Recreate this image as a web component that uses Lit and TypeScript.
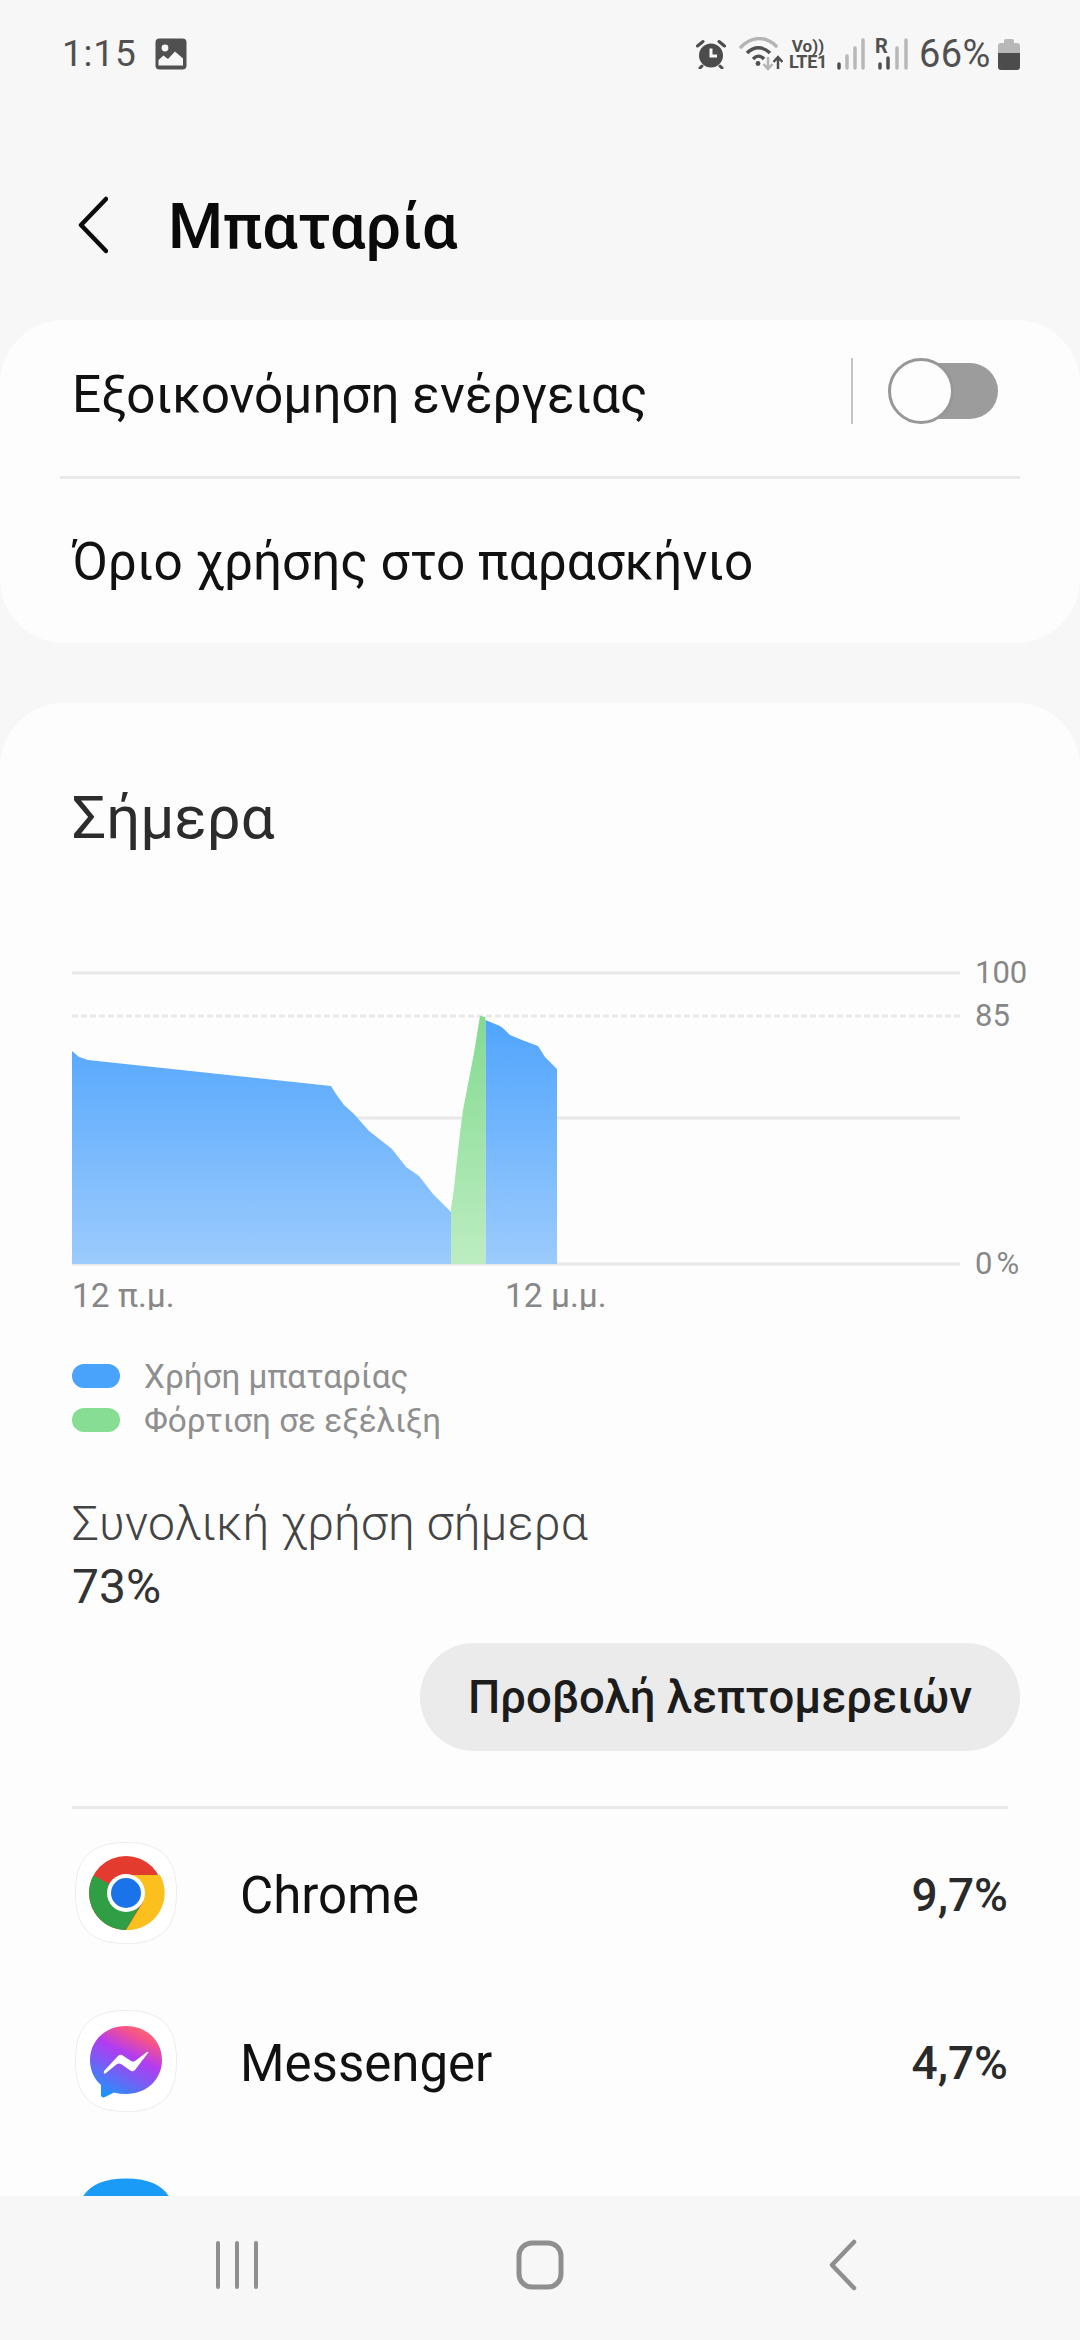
import { LitElement, html, css, svg } from "lit";
import { customElement } from "lit/decorators.js";

const SQ = "M51 .5C86 .5 101.5 16 101.5 51S86 101.5 51 101.5 .5 86 .5 51 16 .5 51 .5Z";

const blue1 = "72,1051 79,1057 88,1060 200,1072 331,1086 336,1094 344,1105 354,1114 369,1131 392,1149 406,1167 419,1176 433,1194 451,1212 451,1264 72,1264";
const blue2 = "485.4,1020 500,1026 504,1029 510,1035 522,1040 538,1046 545,1057 557,1069 557,1264 485.4,1264";
const green = "451,1264 451,1208 453,1196 460,1133 463,1110 474,1053 480,1016 485.4,1017 485.4,1264";

@customElement("app-root")
export class AppRoot extends LitElement {
  static styles = css`
    :host {
      display: flex;
      flex-direction: column;
      width: 1080px;
      height: 2340px;
      overflow: hidden;
      background: #f7f7f7;
      font-family: Roboto, "Noto Sans", sans-serif;
      color: #111;
    }
    .status {
      height: 104px;
      display: flex;
      align-items: center;
      padding: 3px 60px 0 62px;
      box-sizing: border-box;
      color: #505050;
      flex: none;
    }
    .time { font-size: 37px; letter-spacing: 0.8px; line-height: 100px; }
    .pic { margin-left: 18px; }
    .spacer { flex: 1; }
    .status svg { display: block; flex: none; }
    .net { width: 38px; margin-left: 6px; display: flex; flex-direction: column; align-items: center; font-weight: 700; line-height: 15px; color: #505050; }
    .vo { font-size: 17px; }
    .lte { font-size: 18px; letter-spacing: -0.3px; }
    .sig1 { margin-left: 10px; }
    .sig2 { margin-left: 10px; }
    .pct { font-size: 38px; width: 72px; margin-left: 10px; white-space: nowrap; letter-spacing: 0.4px; }
    .batt { margin-left: 7px; }
    .alarm { margin-right: 13px; }
    .header {
      height: 216px;
      flex: none;
      display: flex;
      align-items: center;
      box-sizing: border-box;
      padding: 26px 0 0 78px;
    }
    .header h1 {
      margin: 4px 0 0 60px;
      font-size: 63px;
      font-weight: 500;
      color: #0a0a0a;
      line-height: 80px;
    }
    .main { flex: 1; min-height: 0; overflow: hidden; }
    .card { background: #fdfdfd; border-radius: 64px; }
    .top { height: 323px; display: flex; flex-direction: column; }
    .row1 { height: 156px; box-sizing: border-box; display: flex; align-items: center; padding: 0 82px 14px 72px; }
    .row1 .label, .row2 { font-size: 51.3px; color: #111; }
    .row1 .label { margin-top: 6px; }
    .grow { flex: 1; }
    .vline { width: 2px; height: 66px; background: #c4c4c4; margin-right: 37px; }
    .toggle { position: relative; width: 108px; height: 56px; border-radius: 28px; background: #9c9c9c; }
    .thumb {
      position: absolute; left: -2px; top: -5px; width: 66px; height: 66px; box-sizing: border-box;
      border-radius: 50%; background: #fdfdfd; border: 3px solid #979797;
    }
    .sep { height: 3px; background: #e9e9e9; margin: 0 60px; flex: none; }
    .row2 { flex: 1; display: flex; align-items: center; padding: 0 72px 0; }
    .body { margin-top: 60px; padding: 85px 72px 0; }
    h2 { margin: 0; font-size: 60px; font-weight: 400; line-height: 60px; color: #2c2c2c; }
    .chart { display: block; margin: 112px -64px 0 0; width: 1000px; height: 350px; }
    .chart text { font-family: Roboto, "Noto Sans", sans-serif; fill: #878787; font-size: 33.500px; }
    .chart .y { font-size: 31px; }
    .legend { margin-top: 44px; display: flex; flex-direction: column; }
    .leg { height: 44px; display: flex; align-items: center; gap: 24px; font-size: 33.300px; color: #8f8f8f; }
    .sw { width: 48px; height: 24px; border-radius: 12px; }
    .sw.b { background: #4aa3fa; }
    .sw.g { background: #86dd93; }
    .total { margin-top: 52px; font-size: 48px; font-weight: 300; line-height: 60px; color: #444; letter-spacing: 0.2px; }
    .val { font-size: 48px; line-height: 65px; color: #333; }
    .btnrow { display: flex; justify-content: flex-end; margin: 24px -12px 0 0; }
    .btn {
      width: 600px; height: 108px; border-radius: 54px; background: #ebebeb; display: flex;
      align-items: center; justify-content: center; font-size: 45.500px; font-weight: 500; color: #1c1c1c;
    }
    .sep2 { height: 3px; background: #e9e9e9; margin-top: 55px; }
    .app { height: 168px; display: flex; align-items: center; }
    .app svg { display: block; flex: none; margin-left: 3px; }
    .app .name { margin-left: 63px; margin-top: 5px; font-size: 51px; color: #111; }
    .app .p { font-size: 46px; margin-top: 3px; font-weight: 500; color: #2a2a2a; }
    .nav {
      height: 144px; flex: none; background: #f7f7f7; display: grid;
      grid-template-columns: 1fr 1fr 1fr; align-items: center; justify-items: center; padding: 0 86px;
    }
    .nav svg { display: block; margin-top: -6px; }
  `;

  render() {
    return html`
      <div class="status">
        <span class="time">1:15</span>
        <svg class="pic" width="32" height="32" viewBox="0 0 32 32">
          <rect width="31" height="31" x=".5" y=".5" rx="4" fill="#505050"/>
          <circle cx="10" cy="10" r="3.400" fill="#f7f7f7"/>
          <path d="M3.500 27.500V22l5-4.500 4.500 3.500 7-7.500 8 7V27.500Z" fill="#f7f7f7"/>
        </svg>
        <span class="spacer"></span>
        <svg class="alarm" width="30" height="30" viewBox="0 0 30 30">
          <circle cx="15" cy="16.500" r="12" fill="#4c4c4c"/>
          <path d="M1.500 7 7 2.500M28.500 7 23 2.500M6 27l-2 2M24 27l2 2" stroke="#4c4c4c" stroke-width="3" stroke-linecap="round"/>
          <path d="M15 9.500v7.500h6" stroke="#f7f7f7" stroke-width="3" fill="none"/>
        </svg>
        <svg width="44" height="34" viewBox="0 0 44 34">
          <path d="M2 10C13-1 27-1 37 9" stroke="#b4b4b4" stroke-width="3.500" fill="none" stroke-linecap="round"/>
          <path d="M8 16c7-7 16-7 23 0" stroke="#505050" stroke-width="3.500" fill="none"/>
          <path d="M14 22c4-4 7-4 11 0" stroke="#505050" stroke-width="3.500" fill="none"/>
          <circle cx="19" cy="26.500" r="2.400" fill="#505050"/>
          <path d="M29 20v12m-4.500-5 4.500 5 4.500-5" stroke="#b4b4b4" stroke-width="2.500" fill="none"/>
          <path d="M39 32V20m-4.500 5 4.500-5 4.500 5" stroke="#505050" stroke-width="2.500" fill="none"/>
        </svg>
        <div class="net"><span class="vo">Vo))</span><span class="lte">LTE1</span></div>
        <svg class="sig1" width="28" height="32" viewBox="0 0 28 32">
          <path d="M2 26v4" stroke="#505050" stroke-width="3.500" stroke-linecap="round"/>
          <path d="M10 18v12M18 10v20M26 2v28" stroke="#b8b8b8" stroke-width="3.500" stroke-linecap="round"/>
        </svg>
        <svg class="sig2" width="34" height="32" viewBox="0 0 34 32">
          <text x="0" y="15" font-family="Roboto" font-weight="700" font-size="20" fill="#505050">R</text>
          <path d="M5 26v4M13 20v10" stroke="#505050" stroke-width="3.500" stroke-linecap="round"/>
          <path d="M22 10v20M31 2v28" stroke="#b8b8b8" stroke-width="3.500" stroke-linecap="round"/>
        </svg>
        <span class="pct">66%</span>
        <svg class="batt" width="22" height="32" viewBox="0 0 22 32">
          <path d="M6 3q0-2 2-2h6q2 0 2 2v2h3q3 0 3 3v9H0V8q0-3 3-3h3Z" fill="#b8b8b8"/>
          <path d="M0 15h22v14q0 3-3 3H3q-3 0-3-3Z" fill="#4c4c4c"/>
        </svg>
      </div>

      <div class="header">
        <svg width="30" height="58" viewBox="0 0 30 58">
          <path d="M28 3 3 29l25 26" fill="none" stroke="#0c0c0c" stroke-width="4.500" stroke-linecap="round" stroke-linejoin="round"/>
        </svg>
        <h1>Μπαταρία</h1>
      </div>

      <div class="main">
        <div class="card top">
          <div class="row1">
            <span class="label">Εξοικονόμηση ενέργειας</span>
            <span class="grow"></span>
            <span class="vline"></span>
            <div class="toggle"><div class="thumb"></div></div>
          </div>
          <div class="sep"></div>
          <div class="row2">Όριο χρήσης στο παρασκήνιο</div>
        </div>

        <div class="card body">
          <h2>Σήμερα</h2>
          ${this.chart()}
          <div class="legend">
            <div class="leg"><span class="sw b"></span>Χρήση μπαταρίας</div>
            <div class="leg"><span class="sw g"></span>Φόρτιση σε εξέλιξη</div>
          </div>
          <div class="total">Συνολική χρήση σήμερα</div>
          <div class="val">73%</div>
          <div class="btnrow"><div class="btn">Προβολή λεπτομερειών</div></div>
          <div class="sep2"></div>
          <div class="app">
            ${this.chromeIcon()}
            <span class="name">Chrome</span><span class="grow"></span><span class="p">9,7%</span>
          </div>
          <div class="app">
            ${this.messengerIcon()}
            <span class="name">Messenger</span><span class="grow"></span><span class="p">4,7%</span>
          </div>
          <div class="app">
            <svg width="102" height="102" viewBox="0 0 102 102"><path d="${SQ}" fill="#1a9bf7"/></svg>
          </div>
        </div>
      </div>

      <div class="nav">
        <svg width="46" height="50" viewBox="0 0 46 50">
          <path d="M4 3v44M23 3v44M42 3v44" stroke="#8f8f8f" stroke-width="4" stroke-linecap="round"/>
        </svg>
        <svg width="48" height="50" viewBox="0 0 48 50">
          <rect x="3" y="3" width="42" height="44" rx="13" fill="none" stroke="#8f8f8f" stroke-width="5"/>
        </svg>
        <svg width="30" height="52" viewBox="0 0 30 52">
          <path d="M26 3 4 26l22 23" fill="none" stroke="#8f8f8f" stroke-width="4.500" stroke-linecap="round" stroke-linejoin="round"/>
        </svg>
      </div>
    `;
  }

  chart() {
    return svg`<svg class="chart" viewBox="72 960 1000 350">
      <defs>
        <linearGradient id="gb" gradientUnits="userSpaceOnUse" x1="0" y1="1016" x2="0" y2="1264">
          <stop offset="0" stop-color="#4fa4fd"/><stop offset="1" stop-color="#9ccbfd"/>
        </linearGradient>
        <linearGradient id="gg" gradientUnits="userSpaceOnUse" x1="0" y1="1016" x2="0" y2="1264">
          <stop offset="0" stop-color="#83da90"/><stop offset="1" stop-color="#bcedc1"/>
        </linearGradient>
      </defs>
      <path d="M72 973H960M72 1118H960M72 1264H960" stroke="#e8e8e8" stroke-width="3"/>
      <path d="M72 1016H960" stroke="#e8e8e8" stroke-width="3" stroke-dasharray="6 3"/>
      <polygon points="${blue1}" fill="url(#gb)"/>
      <polygon points="${blue2}" fill="url(#gb)"/>
      <polygon points="${green}" fill="url(#gg)"/>
      <text class="y" x="975" y="983">100</text>
      <text class="y" x="975" y="1026">85</text>
      <text class="y" x="975" y="1274">0<tspan dx="4">%</tspan></text>
      <text x="72" y="1307">12 π.μ.</text>
      <text x="505" y="1307">12 μ.μ.</text>
    </svg>`;
  }

  chromeIcon() {
    return svg`<svg width="102" height="102" viewBox="0 0 102 102">
      <path d="${SQ}" fill="#fff" stroke="#ececec" stroke-width="1"/>
      <circle cx="51" cy="51" r="37" fill="#e33b2e"/>
      <path d="M51 51 18.500 33.500A37 37 0 0 0 51 88L70 55Z" fill="#2f9e44"/>
      <path d="M51 33H85A37 37 0 0 1 51 88L68 60Z" fill="#fcc01e"/>
      <circle cx="51" cy="51" r="19" fill="#fff"/>
      <circle cx="51" cy="51" r="15" fill="#1a73e8"/>
    </svg>`;
  }

  messengerIcon() {
    return svg`<svg width="102" height="102" viewBox="0 0 102 102">
      <defs>
        <linearGradient id="gm" x1=".25" y1="1" x2=".75" y2="0">
          <stop offset="0" stop-color="#1a96fb"/>
          <stop offset=".35" stop-color="#7a5cf5"/>
          <stop offset=".6" stop-color="#b23cf0"/>
          <stop offset=".85" stop-color="#f5528c"/>
          <stop offset="1" stop-color="#ff6d6d"/>
        </linearGradient>
      </defs>
      <path d="${SQ}" fill="#fff" stroke="#ececec" stroke-width="1"/>
      <path d="M51 16C30 16 15 31 15 50c0 10 4 19 11 25v10c0 2 2 3 4 2l9-4.500c4 1 8 1.500 12 1.500 21 0 36-15 36-34S72 16 51 16Z" fill="url(#gm)"/>
      <path d="M29 61 43 46q2-2 4-1l9 6q2 1 4 0l12-9q2-1 1 1L60 60q-2 2-4 1l-10-7q-2-1-4 0l-11 9q-3 2-2-2Z" fill="#fff"/>
    </svg>`;
  }
}
